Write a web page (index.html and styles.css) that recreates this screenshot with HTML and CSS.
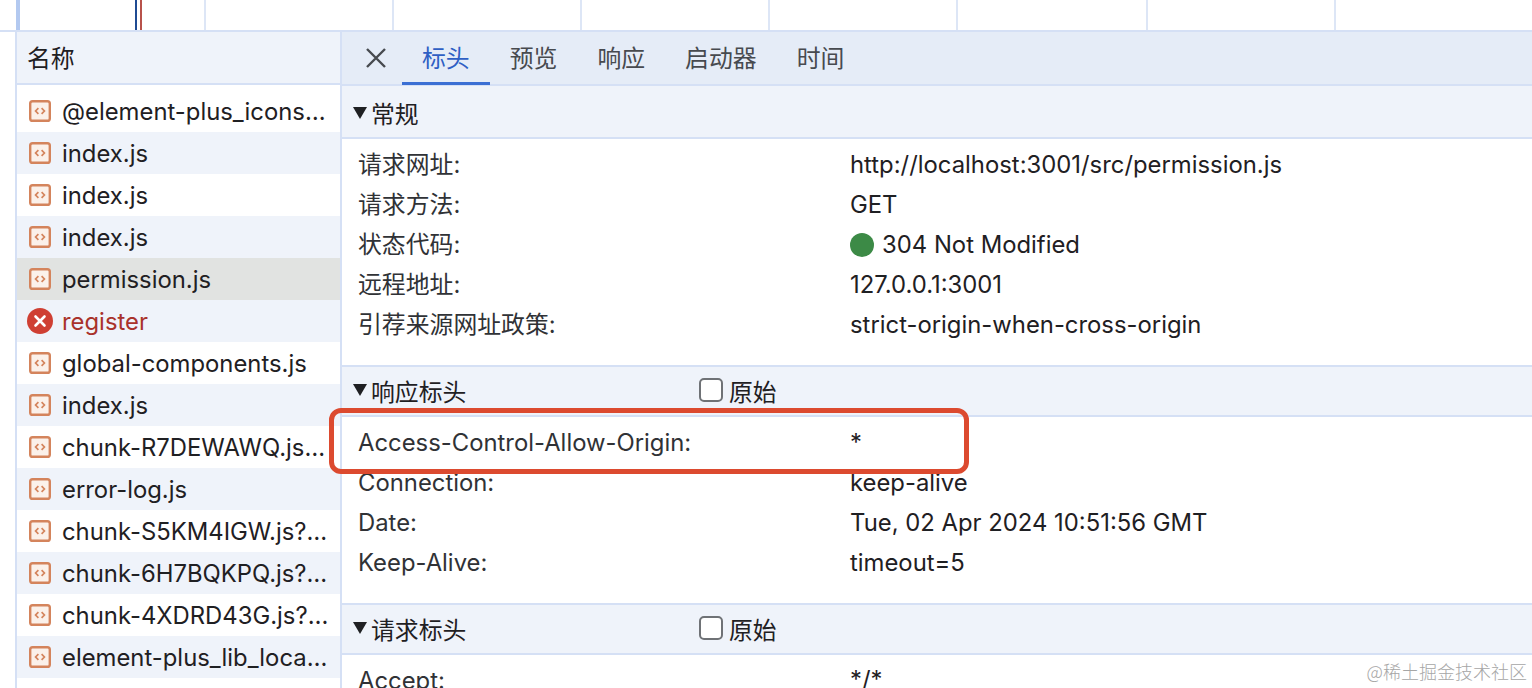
FILE: index.html
```html
<!DOCTYPE html>
<html lang="zh-CN">
<head>
    <meta charset="UTF-8">
    <meta name="viewport" content="width=device-width, initial-scale=1.0">
    <title>Network</title>
    <link rel="stylesheet" href="styles.css">
</head>
<body>
    <svg class="defs" width="0" height="0">
        <symbol id="file-icon" viewBox="0 0 22 22">
            <rect x="1.2" y="1.2" width="19.6" height="19.6" rx="2.4" fill="#fbf1ea" stroke="#d4845c" stroke-width="2.4"/>
            <path d="M9.4 8.2 6.6 11l2.8 2.8M12.6 8.2l2.8 2.8-2.8 2.8" fill="none" stroke="#d4845c" stroke-width="1.7"/>
        </symbol>
    </svg>

    <div class="timeline">
        <div class="marker marker-blue"></div>
        <div class="marker marker-red"></div>
        <div class="tick tick-first"></div>
        <div class="tick"></div>
        <div class="tick"></div>
        <div class="tick"></div>
        <div class="tick"></div>
        <div class="tick tick-wide"></div>
        <div class="tick"></div>
    </div>

    <div class="main">
        <div class="sidebar">
            <div class="name-header">名称</div>
            <ul class="file-list">
                <li class="file"><svg class="file-icon"><use href="#file-icon"/></svg><span class="file-name">@element-plus_icons-vue.js</span></li>
                <li class="file alt"><svg class="file-icon"><use href="#file-icon"/></svg><span class="file-name">index.js</span></li>
                <li class="file"><svg class="file-icon"><use href="#file-icon"/></svg><span class="file-name">index.js</span></li>
                <li class="file alt"><svg class="file-icon"><use href="#file-icon"/></svg><span class="file-name">index.js</span></li>
                <li class="file selected"><svg class="file-icon"><use href="#file-icon"/></svg><span class="file-name">permission.js</span></li>
                <li class="file alt failed">
                    <svg class="file-icon" viewBox="0 0 26 26">
                        <circle cx="13" cy="13" r="13" fill="#cf3f33"/>
                        <path d="M8.5 8.5l9 9M17.5 8.5l-9 9" stroke="#fff" stroke-width="2.6" stroke-linecap="round"/>
                    </svg>
                    <span class="file-name">register</span>
                </li>
                <li class="file"><svg class="file-icon"><use href="#file-icon"/></svg><span class="file-name">global-components.js</span></li>
                <li class="file alt"><svg class="file-icon"><use href="#file-icon"/></svg><span class="file-name">index.js</span></li>
                <li class="file"><svg class="file-icon"><use href="#file-icon"/></svg><span class="file-name">chunk-R7DEWAWQ.js?v=1</span></li>
                <li class="file alt"><svg class="file-icon"><use href="#file-icon"/></svg><span class="file-name">error-log.js</span></li>
                <li class="file"><svg class="file-icon"><use href="#file-icon"/></svg><span class="file-name">chunk-S5KM4IGW.js?v=1</span></li>
                <li class="file alt"><svg class="file-icon"><use href="#file-icon"/></svg><span class="file-name">chunk-6H7BQKPQ.js?v=1</span></li>
                <li class="file"><svg class="file-icon"><use href="#file-icon"/></svg><span class="file-name">chunk-4XDRD43G.js?v=1</span></li>
                <li class="file alt"><svg class="file-icon"><use href="#file-icon"/></svg><span class="file-name">element-plus_lib_locale.js</span></li>
            </ul>
        </div>

        <div class="details">
            <div class="tabs">
                <svg class="close" viewBox="0 0 22 22"><path d="M2 2l18 18M20 2 2 20" stroke="#474a4f" stroke-width="2.4"/></svg>
                <span class="tab active">标头</span>
                <span class="tab">预览</span>
                <span class="tab">响应</span>
                <span class="tab">启动器</span>
                <span class="tab">时间</span>
            </div>

            <div class="section-header first">
                <span class="arrow"></span><span class="section-title">常规</span>
            </div>
            <div class="section-body">
                <div class="row"><span class="key">请求网址:</span><span class="value">http://localhost:3001/src/permission.js</span></div>
                <div class="row"><span class="key">请求方法:</span><span class="value">GET</span></div>
                <div class="row"><span class="key">状态代码:</span><span class="value"><i class="status-dot"></i>304 Not Modified</span></div>
                <div class="row"><span class="key">远程地址:</span><span class="value">127.0.0.1:3001</span></div>
                <div class="row"><span class="key">引荐来源网址政策:</span><span class="value">strict-origin-when-cross-origin</span></div>
            </div>

            <div class="section-header">
                <span class="arrow"></span><span class="section-title">响应标头</span>
                <span class="raw"><i class="checkbox"></i>原始</span>
            </div>
            <div class="section-body">
                <div class="row"><span class="key">Access-Control-Allow-Origin:</span><span class="value">*</span></div>
                <div class="row"><span class="key">Connection:</span><span class="value">keep-alive</span></div>
                <div class="row"><span class="key">Date:</span><span class="value">Tue, 02 Apr 2024 10:51:56 GMT</span></div>
                <div class="row"><span class="key">Keep-Alive:</span><span class="value">timeout=5</span></div>
            </div>

            <div class="section-header">
                <span class="arrow"></span><span class="section-title">请求标头</span>
                <span class="raw"><i class="checkbox"></i>原始</span>
            </div>
            <div class="section-body">
                <div class="row row-last"><span class="key">Accept:</span><span class="value">*/*</span></div>
            </div>
        </div>
    </div>

    <div class="highlight"></div>
    <div class="watermark">@稀土掘金技术社区</div>
</body>
</html>
```

FILE: styles.css
```css
* { box-sizing: border-box; }
body { margin: 0; height: 688px; overflow: hidden; position: relative; background-color: #fff; color: #1f2023; font-family: Inter, "Noto Sans CJK SC", sans-serif; font-size: 23.85px; }
.defs { position: absolute; }

.timeline { display: flex; height: 32px; padding-left: 16px; border-bottom: 2px solid #d5e0f5; position: relative; }
.tick { width: 188px; border-right: 2px solid #dde6f6; }
.tick-first { width: 190px; border-left: 4px solid #b3c9f0; }
.tick-wide { width: 190px; }
.marker { position: absolute; top: 0; width: 2px; height: 30px; }
.marker-blue { left: 135px; background-color: #1f4b93; }
.marker-red { left: 140px; background-color: #b8524b; }

.main { display: flex; height: 656px; padding-left: 15px; overflow: hidden; }
.sidebar { width: 327px; flex-shrink: 0; border-left: 2px solid #d5e0f5; border-right: 2px solid #d5e0f5; }
.name-header { height: 53px; padding-left: 10px; line-height: 53px; background-color: #eff3fa; border-bottom: 2px solid #d5e0f5; }
.file-list { list-style: none; margin: 5px 0 0; padding: 0; }
.file { display: flex; align-items: center; height: 42px; padding-left: 12px; }
.file.alt { background-color: #eff3fa; }
.file.selected { background-color: #e1e3e1; }
.file.failed { color: #a9322b; }
.file-icon { width: 22px; height: 22px; flex-shrink: 0; margin-right: 11px; }
.file.failed .file-icon { width: 26px; height: 26px; margin: 0 9px 0 -2px; }
.file-name { width: 267px; overflow: hidden; white-space: nowrap; text-overflow: ellipsis; }

.details { flex: 1; min-width: 0; }
.tabs { display: flex; align-items: stretch; height: 54px; padding-left: 23px; background-color: #e5ecf7; border-bottom: 2px solid #d5e0f5; }
.close { width: 22px; height: 22px; margin: 15px 15px 0 0; }
.tab { padding: 0 20px; line-height: 54px; color: #474a4f; margin-bottom: -1px; }
.tab.active { color: #2f5fc4; border-bottom: 3px solid #3b6fd4; }

.section-header { display: flex; align-items: center; height: 52px; padding: 0 0 2px 11px; background-color: #eff3fa; border-top: 2px solid #d5e0f5; border-bottom: 2px solid #d5e0f5; }
.section-header.first { height: 53px; padding: 2px 0 0 11px; border-top: none; }
.arrow { width: 0; height: 0; margin-right: 4px; border-left: 7px solid transparent; border-right: 7px solid transparent; border-top: 12px solid #1f2023; }
.section-title { width: 328px; }
.raw { display: flex; align-items: center; }
.checkbox { width: 24px; height: 24px; margin-right: 6px; background-color: #fff; border: 2px solid #6f7276; border-radius: 5px; }

.section-body { padding: 6px 0 20px 16px; }
.row { display: flex; height: 40px; line-height: 40px; white-space: nowrap; }
.row-last { height: 38px; }
.key { width: 492px; flex-shrink: 0; color: #303236; }
.value { display: flex; align-items: center; }
.status-dot { width: 24px; height: 24px; margin-right: 8px; border-radius: 50%; background-color: #3c8a46; }

.highlight { position: absolute; left: 329px; top: 408px; width: 640px; height: 66px; border: 5px solid #dc4a2f; border-radius: 12px; }
.watermark { position: absolute; right: 5px; bottom: 4px; font-size: 18px; font-family: "Noto Sans CJK SC", sans-serif; font-weight: 300; color: #a6a6a6; }
```
